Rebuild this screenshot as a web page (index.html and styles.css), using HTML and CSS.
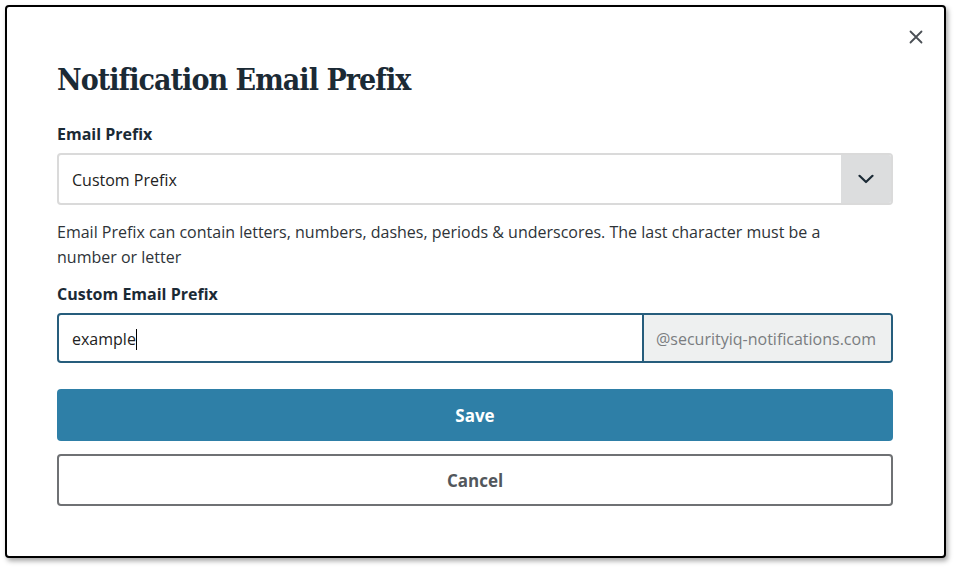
FILE: index.html
```html
<!DOCTYPE html>
<html lang="en">
<head>
<meta charset="utf-8">
<title>Notification Email Prefix</title>
<link rel="stylesheet" href="styles.css">
</head>
<body>
<div class="modal">
  <button class="close" aria-label="Close">
    <svg width="14" height="14" viewBox="0 0 14 14"><path d="M1.5 1.5 L12.5 12.5 M12.5 1.5 L1.5 12.5" stroke="#4a4f55" stroke-width="1.8" fill="none" stroke-linecap="round"/></svg>
  </button>
  <h1 class="title">Notification Email Prefix</h1>
  <div class="label">Email Prefix</div>
  <div class="select">
    <span class="select-value">Custom Prefix</span>
    <span class="select-arrow">
      <svg width="16" height="10" viewBox="0 0 16 10"><path d="M1.5 1.8 L8 8 L14.5 1.8" stroke="#1c2b36" stroke-width="2.2" fill="none" stroke-linecap="round" stroke-linejoin="round"/></svg>
    </span>
  </div>
  <p class="help">Email Prefix can contain letters, numbers, dashes, periods &amp; underscores. The last character must be a number or letter</p>
  <div class="label label-second">Custom Email Prefix</div>
  <div class="input-group">
    <span class="input-value">example<span class="caret"></span></span>
    <span class="suffix">@securityiq-notifications.com</span>
  </div>
  <button class="btn btn-save">Save</button>
  <button class="btn btn-cancel">Cancel</button>
</div>
</body>
</html>
```

FILE: styles.css
```css
* { box-sizing: border-box; }
html, body { margin: 0; padding: 0; background: #ffffff; }
body { padding: 5px 9px 10px 5px; font-family: "Open Sans", "Noto Sans", sans-serif; }

.modal {
  position: relative;
  width: 941px;
  height: 553px;
  border: 2.5px solid #000;
  border-radius: 4px;
  background: #fff;
  box-shadow: 2px 3px 5px rgba(0,0,0,0.35);
  padding: 0 51px 0 50px;
  display: flex;
  flex-direction: column;
}

.close {
  position: absolute;
  top: 22px;
  right: 20px;
  width: 16px;
  height: 16px;
  padding: 0;
  border: 0;
  background: none;
  display: flex;
  align-items: center;
  justify-content: center;
}

.title {
  margin: 53px 0 0 0;
  font-family: "DejaVu Serif Condensed", "DejaVu Serif", serif;
  font-weight: bold;
  font-size: 30px;
  line-height: 40px;
  color: #1b2a35;
  letter-spacing: -0.95px;
}

.label {
  margin-top: 23px;
  font-weight: 700;
  font-size: 16px;
  line-height: 22px;
  color: #1b2a35;
}
.label-second { margin-top: 13px; }

.select {
  margin-top: 8px;
  height: 52px;
  border: 2px solid #dadada;
  border-radius: 4px;
  display: flex;
  align-items: stretch;
  overflow: hidden;
}
.select-value {
  flex: 1;
  display: flex;
  align-items: center;
  padding-left: 13px;
  padding-top: 2px;
  font-size: 16px;
  color: #222;
}
.select-arrow {
  width: 50px;
  background: #dcddde;
  display: flex;
  align-items: center;
  justify-content: center;
}

.help {
  margin: 15px 0 0 0;
  padding-right: 40px;
  font-size: 16px;
  line-height: 25px;
  color: #2e3338;
}

.input-group {
  margin-top: 8px;
  height: 50px;
  border: 2px solid #265d7c;
  border-radius: 4px;
  display: flex;
  align-items: stretch;
  overflow: hidden;
}
.input-value {
  flex: 1;
  display: flex;
  align-items: center;
  padding-left: 13px;
  padding-top: 2px;
  font-size: 16px;
  color: #222;
}
.caret {
  display: inline-block;
  width: 1px;
  height: 21px;
  background: #000;
}
.suffix {
  width: 249px;
  border-left: 2px solid #265d7c;
  background: #eef0f0;
  display: flex;
  align-items: center;
  padding-left: 12px;
  padding-top: 2px;
  font-size: 16px;
  color: #7a7d80;
}

.btn {
  display: block;
  width: 100%;
  height: 52px;
  border-radius: 4px;
  padding-top: 2px;
  font-family: "Open Sans", "Noto Sans", sans-serif;
  font-weight: 700;
  font-size: 17px;
  cursor: pointer;
}
.btn-save {
  margin-top: 26px;
  background: #2e7fa7;
  border: 0;
  color: #fff;
}
.btn-cancel {
  margin-top: 13px;
  background: #fff;
  border: 2px solid #6f7174;
  color: #52575c;
}
```
